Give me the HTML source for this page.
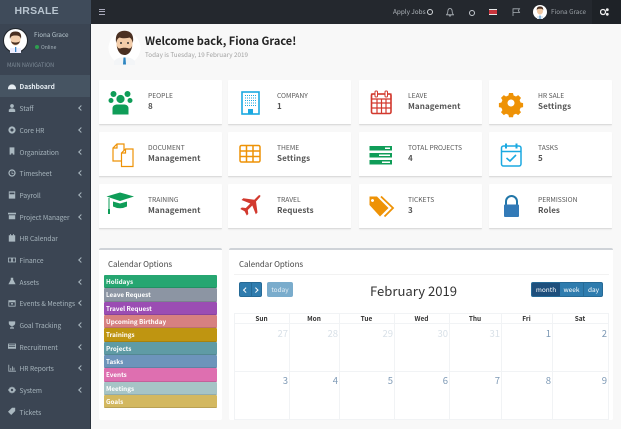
<!DOCTYPE html>
<html><head><meta charset="utf-8"><style>
*{box-sizing:border-box;margin:0;padding:0}
html,body{width:621px;height:429px;overflow:hidden;background:#f8f8f8;font-family:"Noto Sans CJK JP","Liberation Sans",sans-serif;color:#444}
.a{position:absolute}
#sb{left:0;top:0;width:91px;height:429px;background:#3b4553;border-right:1px solid #2b323c}
.nav{position:absolute;left:0;width:90px;height:22px;font-size:6.6px;line-height:22px;color:#a8b6be;padding-left:19.5px;white-space:nowrap}
.nav svg{position:absolute;left:7.5px;top:6.5px;width:8px;height:8px;fill:#aab8c0}
.nav i{position:absolute;left:77px;top:7px;width:4px;height:7px}
.nav i:before{content:"";position:absolute;left:1.6px;top:2px;width:3px;height:3px;border-left:1px solid #a8b6be;border-bottom:1px solid #a8b6be;transform:rotate(45deg)}
.card{position:absolute;width:123px;height:45px;background:#fff;border-bottom:1px solid #dcdcdc;box-shadow:0 1px 1px rgba(0,0,0,.05);border-radius:1px}
.card b{position:absolute;left:49px;top:10px;font-weight:400;font-size:6.7px;line-height:10px;color:#555;white-space:nowrap}
.card u{position:absolute;left:49px;top:19.500px;text-decoration:none;font-weight:700;font-size:8px;line-height:14px;color:#555;letter-spacing:.1px;white-space:nowrap}
.card svg{position:absolute;left:0;top:0;width:48px;height:45px}
.leg{position:absolute;left:104px;width:113px;height:13.400px;font-size:6.3px;line-height:13px;font-weight:700;color:#fff;padding-left:2px;border-radius:1px;white-space:nowrap;border-bottom:1px solid rgba(0,0,0,.12)}
.panel{position:absolute;background:#fff;border-top:2px solid #cfd3d8;border-radius:2px}
.th{position:absolute;top:313px;height:10px;font-size:6.5px;line-height:10px;font-weight:700;text-align:center;color:#333}
.v{position:absolute;width:1px;background:#f1f3f5;top:313px;height:107px}
.h{position:absolute;height:1px;background:#f1f3f5;left:234px;width:375px}
.d{position:absolute;font-size:9.5px;line-height:12px;text-align:right;color:#7d99b5;width:20px}
.o{color:#d9e1e8}
.tb{position:absolute;top:0;font-size:6.4px;line-height:24px;color:#aeb4ba;white-space:nowrap}
</style></head><body>
<div class="a" id="sb"></div>
<div class="a" style="left:0;top:0;width:91px;height:24px;background:#3f4b5a;color:#b8c4cf;font:700 10.5px/23px 'Liberation Sans',sans-serif;padding-left:14.5px;letter-spacing:.2px">HRSALE</div>
<div class="a" style="left:91px;top:0;width:530px;height:24px;background:#24282e"></div>
<div class="a" style="left:99px;top:9px;width:6px;height:5.5px;border-top:1px solid #aab;border-bottom:1px solid #aab"><div style="height:1px;background:#aab;margin-top:1.2px"></div></div>

<!-- sidebar user -->
<svg class="a" style="left:3px;top:28px" width="25" height="25" viewBox="0 0 25 25"><circle cx="12.5" cy="12.5" r="12" fill="#fff" stroke="#20252b"/><path d="M7 20h11v5H7z" fill="#eef"/><rect x="12" y="19" width="1.3" height="5" fill="#3a87c8"/><ellipse cx="12.5" cy="11.5" rx="5" ry="6" fill="#f3cfae"/><path d="M7 11C6 5 9 3.500 12.500 3.500S19 5 18 11c-1-3-2-3.500-5.500-3.500S8 8 7 11z" fill="#4a3022"/><path d="M8 13c1 5 8 5 9 0-1 2-8 2-9 0z" fill="#4a3022"/></svg>
<div class="a" style="left:34px;top:29px;font-size:6.3px;line-height:12px;color:#b8c7ce;white-space:nowrap">Fiona Grace</div>
<div class="a" style="left:35px;top:45px;width:4px;height:4px;border-radius:50%;background:#2e9e4f"></div>
<div class="a" style="left:41px;top:42.500px;font-size:5px;line-height:9px;color:#a7b4bc">Online</div>
<div class="a" style="left:7px;top:60px;font-size:5.6px;line-height:11px;color:#7f8c98;white-space:nowrap">MAIN NAVIGATION</div>

<div class="nav" style="top:75px;background:#465462;height:22px;color:#e6edf2;font-weight:700"><svg viewBox="0 0 10 10" style="fill:#e6edf2"><path d="M0 8a5 5 0 0 1 10 0v1H0z"/></svg>Dashboard</div>
<div class="nav" style="top:97px"><svg viewBox="0 0 10 10"><circle cx="5" cy="2.500" r="2.300"/><path d="M1 10V7q4-3 8 0v3z"/></svg>Staff<i></i></div>
<div class="nav" style="top:119px"><svg viewBox="0 0 10 10"><path fill-rule="evenodd" d="M5 .5a4.500 4.500 0 1 0 .01 0zM5 3a2 2 0 1 1-.01 0z"/></svg>Core HR<i></i></div>
<div class="nav" style="top:140.500px"><svg viewBox="0 0 10 10"><path d="M2 .5h6v9H6V8H4v1.500H2z"/></svg>Organization<i></i></div>
<div class="nav" style="top:162px"><svg viewBox="0 0 10 10"><path fill-rule="evenodd" d="M5 .5a4.500 4.500 0 1 0 .01 0zM5 2a3 3 0 1 1-.01 0z"/><path d="M4.600 3h.8v2.500H7v.8H4.600z"/></svg>Timesheet<i></i></div>
<div class="nav" style="top:184px"><svg viewBox="0 0 10 10"><path fill-rule="evenodd" d="M1 .5h8v9H1zM2 2v2h6V2z"/></svg>Payroll<i></i></div>
<div class="nav" style="top:205.500px"><svg viewBox="0 0 10 10"><path d="M0 1h10v2H0zM1 4h8v5H1z"/></svg>Project Manager<i></i></div>
<div class="nav" style="top:227px"><svg viewBox="0 0 10 10"><path d="M1 1.500h8v8H1zM2.500 0h1v2h-1zM6.500 0h1v2h-1z"/></svg>HR Calendar</div>
<div class="nav" style="top:249px"><svg viewBox="0 0 10 10"><path fill-rule="evenodd" d="M0 2h10v6H0zM1 3v4h3V3zM6 3v4h3V3z"/></svg>Finance<i></i></div>
<div class="nav" style="top:270.500px"><svg viewBox="0 0 10 10"><path d="M3.500 1h3v2.500L9.500 9h-9L3.500 3.500z"/></svg>Assets<i></i></div>
<div class="nav" style="top:292px"><svg viewBox="0 0 10 10"><path fill-rule="evenodd" d="M.5 1.500h9v8h-9zM1.500 4v4.500h7V4z"/><path d="M4 5h2v2H4z"/></svg>Events &amp; Meetings<i></i></div>
<div class="nav" style="top:314px"><svg viewBox="0 0 10 10"><path d="M1 .5h8v2C9 5 7 6 5.500 6.200V8H7.500v1.500h-5V8h2V6.200C3 6 1 5 1 2.500z"/></svg>Goal Tracking<i></i></div>
<div class="nav" style="top:335.500px"><svg viewBox="0 0 10 10"><path fill-rule="evenodd" d="M0 2h10v6.500H0zM1 3v1h8V3zM1 5v1h8V5z"/></svg>Recruitment<i></i></div>
<div class="nav" style="top:357px"><svg viewBox="0 0 10 10"><path d="M.5 1h1v7.500H10v1H.5zM3 5h1v3H3zM5 3h1v5H5zM7 4.500h1V8H7z"/></svg>HR Reports<i></i></div>
<div class="nav" style="top:379px"><svg viewBox="0 0 10 10"><path fill-rule="evenodd" d="M5 .5l1 1.300 1.700-.3.500 1.600 1.600.9-.7 1 .7 1-1.600.9-.5 1.600-1.700-.3-1 1.300-1-1.300-1.700.3-.5-1.600L.2 6l.7-1-.7-1 1.600-.9.500-1.600 1.700.3zM5 3.500a1.500 1.500 0 1 0 .01 0z"/></svg>System<i></i></div>
<div class="nav" style="top:400.500px"><svg viewBox="0 0 10 10"><path d="M5 1h4v4l-5 5-4-4z"/></svg>Tickets</div>

<!-- topbar right -->
<div class="tb" style="left:393px">Apply Jobs</div>
<div class="a" style="left:427px;top:9px;width:6px;height:6px;border-radius:50%;border:1.800px solid #d5d9dd"></div>
<svg class="a" style="left:446px;top:8px" width="8" height="9" viewBox="0 0 8 9"><path d="M4 .5C2 .5 1.800 2.500 1.800 4S1 6 .5 6.800h7C7 6 6.200 5.500 6.200 4S6 .5 4 .5zM3 7.500q1 1.300 2 0" fill="none" stroke="#b4bac0" stroke-width=".8"/></svg>
<div class="a" style="left:469px;top:9.500px;width:6px;height:6px;border-radius:50%;border:1.800px solid #c5cad0"></div>
<div class="a" style="left:489px;top:9px;width:8px;height:6px;background:#c9343c;border-top:1.500px solid #e8e8e8;border-bottom:1.500px solid #e8e8e8"></div>
<svg class="a" style="left:512px;top:8px" width="9" height="8" viewBox="0 0 9 8"><path d="M1 8V.8h6.500L6.300 2.500 7.500 4.500H1" fill="none" stroke="#a8aeb4" stroke-width=".8"/></svg>
<svg class="a" style="left:533px;top:5px" width="14" height="14" viewBox="0 0 14 14"><circle cx="7" cy="7" r="7" fill="#fff"/><ellipse cx="7" cy="6" rx="3" ry="3.600" fill="#f0c9a5"/><path d="M3.800 5.500C3.500 2 5 1.500 7 1.500s3.500.5 3.200 4C9.700 4 9 3.800 7 3.800s-2.700.2-3.200 1.700z" fill="#4a3022"/><path d="M4 11h6v3H4z" fill="#dfe9f2"/><rect x="6.500" y="10.500" width="1" height="3.500" fill="#3a87c8"/></svg>
<div class="tb" style="left:551px;color:#9aa0a6">Fiona Grace</div>
<div class="a" style="left:592px;top:0;width:29px;height:24px;background:#1e2227"></div>
<svg class="a" style="left:600px;top:8px" width="9" height="8" viewBox="0 0 9 8"><circle cx="3" cy="4" r="2.500" fill="none" stroke="#eee" stroke-width="1.300"/><circle cx="7.300" cy="1.700" r="1.400" fill="#eee"/><circle cx="7.300" cy="6.300" r="1.400" fill="#eee"/></svg>

<!-- welcome -->
<svg class="a" style="left:108px;top:30px" width="33" height="35" viewBox="0 0 33 35"><circle cx="16.500" cy="18" r="16" fill="#fff"/><path d="M6 35v-4q3-3 7-3.500h7q4 .5 7 3.500v4z" fill="#f3f5f7"/><path d="M15.500 27.500h2l.5 7h-3z" fill="#2e86c1"/><ellipse cx="16.500" cy="14" rx="8" ry="10" fill="#f2cca9"/><circle cx="13" cy="13" r="1" fill="#333"/><circle cx="20" cy="13" r="1" fill="#333"/><path d="M8.200 13C6.500 4 11 .8 16.500.8S26.500 4 24.800 13c-.8-3.500-2-5-3.500-5.500-3 1-7 1-9.500 0C10 8 9 9.500 8.200 13z" fill="#4a3022"/><path d="M8.800 15.500c.5 5 3 9.500 7.700 9.500s7.200-4.500 7.700-9.500c-.8 2.500-2 3-3.500 3-1.500-1-6.900-1-8.400 0-1.500 0-2.700-.5-3.500-3z" fill="#4a3022"/></svg>
<div class="a" style="left:145px;top:32px;font-size:11px;line-height:18px;font-weight:700;color:#222;white-space:nowrap">Welcome back, Fiona Grace!</div>
<div class="a" style="left:145px;top:48.500px;font-size:6.3px;line-height:11px;color:#a2a2a2;white-space:nowrap">Today is Tuesday, 19 February 2019</div>

<!-- cards row 1 -->
<div class="card" style="left:99px;top:80px"><svg viewBox="0 0 48 45"><g fill="#0f9d58"><circle cx="14.500" cy="14" r="3"/><circle cx="28.500" cy="14" r="3"/><circle cx="12" cy="20.500" r="2.500"/><circle cx="31" cy="20.500" r="2.500"/><circle cx="21.500" cy="19" r="4.500" stroke="#fff" stroke-width=".8"/><path d="M13.500 34.500v-6q0-3.500 4-4h8q4 .5 4 4v6z"/></g></svg><b>PEOPLE</b><u>8</u></div>
<div class="card" style="left:228px;top:80px"><svg viewBox="0 0 48 45"><rect x="14" y="12" width="17" height="22" fill="#fff" stroke="#1ba9e1" stroke-width="1.600"/><path d="M17 15.500h11M17 18h11M17 20.500h11M17 23h11M17 25.500h11" stroke="#1ba9e1" stroke-width="1.100" stroke-dasharray="1 1"/><rect x="20" y="29" width="5" height="5" fill="#1ba9e1"/></svg><b>COMPANY</b><u>1</u></div>
<div class="card" style="left:359px;top:80px"><svg viewBox="0 0 48 45"><rect x="12.500" y="14" width="19.500" height="19.500" rx="1.500" fill="none" stroke="#d2392e" stroke-width="1.600"/><path d="M12.500 14h19.500v5H12.500zM12.500 23h19.500M12.500 28h19.500M18 19v14M22.500 19v14M27 19v14" fill="none" stroke="#d2392e" stroke-width="1.200"/><rect x="16" y="11" width="2.500" height="6" rx="1" fill="#fff" stroke="#d2392e"/><rect x="26" y="11" width="2.500" height="6" rx="1" fill="#fff" stroke="#d2392e"/></svg><b>LEAVE</b><u>Management</u></div>
<div class="card" style="left:489px;top:80px"><svg viewBox="0 0 48 45"><path fill="#ee9206" fill-rule="evenodd" d="M20 13h4l.6 2.500 2.400 1 2.200-1.400 2.800 2.800-1.400 2.200 1 2.400 2.500.6v4l-2.500.6-1 2.400 1.400 2.200-2.800 2.800-2.200-1.400-2.400 1-.6 2.500h-4l-.6-2.500-2.400-1-2.200 1.400-2.800-2.800 1.400-2.200-1-2.400-2.500-.6v-4l2.500-.6 1-2.400-1.400-2.200 2.800-2.800 2.200 1.400 2.400-1zM22 19.500a3.500 3.500 0 1 0 .01 0z"/></svg><b>HR SALE</b><u>Settings</u></div>
<!-- row 2 -->
<div class="card" style="left:99px;top:132px"><svg viewBox="0 0 48 45" fill="#fff" stroke="#ee9206" stroke-width="1.200"><path d="M14 29V16l4-4h7v17z"/><path d="M22.500 34.500V21l4-4h7.500v17.500z"/><path d="M14 16h4v-4M22.500 21h4v-4" fill="none"/></svg><b>DOCUMENT</b><u>Management</u></div>
<div class="card" style="left:228px;top:132px"><svg viewBox="0 0 48 45" fill="none" stroke="#ee9206" stroke-width="1.500"><rect x="12" y="13.500" width="20" height="16.500" rx="1.500"/><path d="M12 19h20M12 24.500h20M18.500 13.500V30M25 13.500V30"/></svg><b>THEME</b><u>Settings</u></div>
<div class="card" style="left:359px;top:132px"><svg viewBox="0 0 48 45"><g fill="#0f9d58"><rect x="10.500" y="14" width="22.500" height="4.500"/><rect x="10.500" y="21" width="22.500" height="4.500"/><rect x="10.500" y="28" width="22.500" height="4.500"/></g><g fill="#fff"><rect x="26" y="15.500" width="5" height="1.500"/><rect x="20" y="22.500" width="11" height="1.500"/><rect x="23" y="29.500" width="8" height="1.500"/></g></svg><b>TOTAL PROJECTS</b><u>4</u></div>
<div class="card" style="left:489px;top:132px"><svg viewBox="0 0 48 45" fill="none" stroke="#1ba9e1" stroke-width="1.500"><rect x="12.500" y="14" width="19.500" height="20" rx="2"/><path d="M12.500 19.500h19.500"/><path d="M17 11.500v5M27.500 11.500v5" stroke-width="2"/><path d="M17.500 26l3.500 3 6-6" stroke-width="1.600"/></svg><b>TASKS</b><u>5</u></div>
<!-- row 3 -->
<div class="card" style="left:99px;top:184px"><svg viewBox="0 0 48 45" fill="#0f9d58"><path d="M7.500 12.500l13.500-4 14 4-14 4.500z"/><path d="M14 17.500l7 2 7-2v5q-7 3.500-14 0z"/><rect x="9.500" y="14" width="1" height="13"/><rect x="9" y="25" width="2" height="5"/></svg><b>TRAINING</b><u>Management</u></div>
<div class="card" style="left:228px;top:184px"><svg viewBox="0 0 48 45"><path fill="#d2392e" d="M30.500 11.500c1.500-1 2.500 0 1.500 1.500l-4 4.500 1.500 11-1.700 1.800-3.500-8.800-4.500 4.500.5 4-1.500 1.500-2.200-4.300-4.300-2.200 1.500-1.500 4 .5 4.500-4.500-8.800-3.500 1.800-1.700 11 1.500z"/></svg><b>TRAVEL</b><u>Requests</u></div>
<div class="card" style="left:359px;top:184px"><svg viewBox="0 0 48 45"><path fill="#ee9206" fill-rule="evenodd" d="M10.500 12.500h7.500l11.500 11.500-8.500 8.500-10.500-11.500zM13.500 15a1.500 1.500 0 1 0 .01 0z"/><path d="M22 12.500l12 11.500-8.500 8.500" fill="none" stroke="#ee9206" stroke-width="1.800"/></svg><b>TICKETS</b><u>3</u></div>
<div class="card" style="left:489px;top:184px"><svg viewBox="0 0 48 45"><path d="M17 21v-3.500a5.500 5.500 0 0 1 11 0V21" fill="none" stroke="#2176a8" stroke-width="2"/><rect x="15" y="20.500" width="15" height="12.500" rx="1" fill="#337ab7"/></svg><b>PERMISSION</b><u>Roles</u></div>

<!-- left panel -->
<div class="panel" style="left:99px;top:248px;width:123px;height:172px"></div>
<div class="a" style="left:108px;top:257.500px;font-size:7.900px;line-height:14px;color:#444;white-space:nowrap">Calendar Options</div>
<div class="leg" style="top:275px;background:#26a671">Holidays</div>
<div class="leg" style="top:288.300px;background:#8c95a3">Leave Request</div>
<div class="leg" style="top:301.600px;background:#9b4db3">Travel Request</div>
<div class="leg" style="top:315px;background:#d78080">Upcoming Birthday</div>
<div class="leg" style="top:328.300px;background:#bf9511">Trainings</div>
<div class="leg" style="top:341.600px;background:#5f9ba5">Projects</div>
<div class="leg" style="top:355px;background:#6d94bb">Tasks</div>
<div class="leg" style="top:368.300px;background:#de6fb0">Events</div>
<div class="leg" style="top:381.600px;background:#a6c4c6">Meetings</div>
<div class="leg" style="top:395px;background:#d3b860">Goals</div>

<!-- right panel -->
<div class="panel" style="left:229px;top:248px;width:384px;height:172px"></div>
<div class="a" style="left:239px;top:257.500px;font-size:7.900px;line-height:14px;color:#444;white-space:nowrap">Calendar Options</div>
<div class="a" style="left:234px;top:274px;width:375px;height:1px;background:#f2f2f2"></div>
<div class="a" style="left:239px;top:282px;width:23px;height:15px;background:#2f7cae;border:1px solid #266a96;border-radius:2px"></div>
<div class="a" style="left:250.500px;top:283px;width:1px;height:13px;background:#266a96"></div>
<div class="a" style="left:244px;top:287.500px;width:3.500px;height:3.500px;border-left:1.200px solid #fff;border-bottom:1.200px solid #fff;transform:rotate(45deg)"></div>
<div class="a" style="left:254px;top:287.500px;width:3.500px;height:3.500px;border-right:1.200px solid #fff;border-top:1.200px solid #fff;transform:rotate(45deg)"></div>
<div class="a" style="left:267px;top:282px;width:26px;height:15px;background:#7aaccc;border-radius:2px;font-size:6.500px;line-height:14.500px;text-align:center;color:#e4eef5">today</div>
<div class="a" style="left:370px;top:281px;font-size:13.100px;line-height:20px;color:#333;white-space:nowrap">February 2019</div>
<div class="a" style="left:531px;top:282px;width:72px;height:15px;background:#2f7cae;border:1px solid #266a96;border-radius:2px;overflow:hidden;font-size:6.500px;line-height:13.500px;color:#fff">
<div class="a" style="left:0;top:0;width:28px;height:14px;background:#1e4f7c;text-align:center">month</div>
<div class="a" style="left:28px;top:0;width:24px;height:14px;text-align:center;border-right:1px solid #266a96">week</div>
<div class="a" style="left:52px;top:0;width:19px;height:14px;text-align:center">day</div></div>

<div class="h" style="top:313px"></div><div class="h" style="top:323px"></div><div class="h" style="top:371px"></div><div class="h" style="top:419px"></div>
<div class="v" style="left:234px"></div><div class="v" style="left:289px"></div><div class="v" style="left:339px"></div><div class="v" style="left:394px"></div><div class="v" style="left:449px"></div><div class="v" style="left:501px"></div><div class="v" style="left:552px"></div><div class="v" style="left:608px"></div>
<div class="th" style="left:234px;width:55px">Sun</div><div class="th" style="left:289px;width:50px">Mon</div><div class="th" style="left:339px;width:55px">Tue</div><div class="th" style="left:394px;width:55px">Wed</div><div class="th" style="left:449px;width:52px">Thu</div><div class="th" style="left:501px;width:51px">Fri</div><div class="th" style="left:552px;width:56px">Sat</div>
<div class="d o" style="left:268px;top:327px">27</div><div class="d o" style="left:318px;top:327px">28</div><div class="d o" style="left:373px;top:327px">29</div><div class="d o" style="left:428px;top:327px">30</div><div class="d o" style="left:480px;top:327px">31</div><div class="d" style="left:531px;top:327px">1</div><div class="d" style="left:587px;top:327px">2</div>
<div class="d" style="left:268px;top:374px">3</div><div class="d" style="left:318px;top:374px">4</div><div class="d" style="left:373px;top:374px">5</div><div class="d" style="left:428px;top:374px">6</div><div class="d" style="left:480px;top:374px">7</div><div class="d" style="left:531px;top:374px">8</div><div class="d" style="left:587px;top:374px">9</div>
</body></html>
